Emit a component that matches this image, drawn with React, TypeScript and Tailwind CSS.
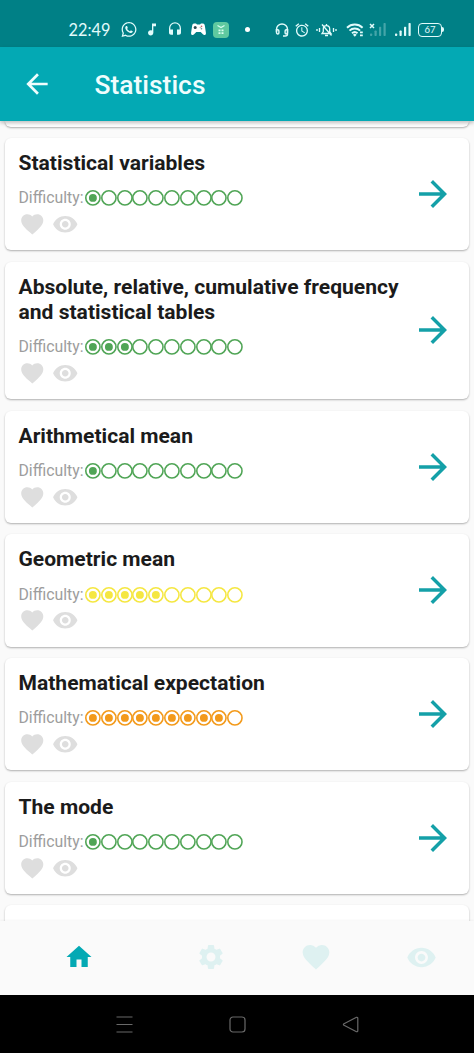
import clsx from "clsx";
import { ReactNode } from "react";
import { FaWhatsapp } from "react-icons/fa";
import {
  MdAlarm,
  MdArrowBack,
  MdArrowForward,
  MdFavorite,
  MdHeadset,
  MdHome,
  MdMusicNote,
  MdSettings,
  MdVisibility,
} from "react-icons/md";

interface Topic {
  title: string;
  difficulty: number;
  tall?: boolean;
}

const topics: Topic[] = [
  { title: "Statistical variables", difficulty: 1 },
  { title: "Absolute, relative, cumulative frequency and statistical tables", difficulty: 3, tall: true },
  { title: "Arithmetical mean", difficulty: 1 },
  { title: "Geometric mean", difficulty: 5 },
  { title: "Mathematical expectation", difficulty: 9 },
  { title: "The mode", difficulty: 1 },
];

function difficultyColor(difficulty: number) {
  if (difficulty > 6) return "text-[#f39a1b]";
  if (difficulty > 3) return "text-[#f5e742]";
  return "text-[#50a556]";
}

function GamepadIcon() {
  return (
    <svg width="15" height="13" viewBox="0 0 15 13">
      <path d="M3 .5h2l1 1h3l1-1h2c1 0 1.5.8 1.8 2l1.1 7.2c.3 2.2-1.7 3-3 1.6L9.700 9H5.300l-2.200 2.300C1.800 12.700-.2 11.900.1 9.700L1.200 2.500C1.500 1.300 2 .5 3 .5z" fill="#fff" />
      <circle cx="4.200" cy="4.500" r="1.500" fill="#2a4a50" />
      <circle cx="10.500" cy="3.400" r=".8" fill="#c7656b" />
      <circle cx="10.500" cy="5.800" r=".8" fill="#6b8f95" />
      <circle cx="9.200" cy="4.600" r=".7" fill="#8fb3a0" />
    </svg>
  );
}

function AppBadge() {
  return (
    <svg width="16" height="16" viewBox="0 0 16 16">
      <rect width="16" height="16" rx="4" fill="#5fc9a0" />
      <path d="M4.500 3.500 8 5.500l3.500-2" fill="none" stroke="#d8fff0" strokeWidth="1.200" />
      <path d="M5.500 7.500h2v1.800h-2zM8.500 7.500h2v1.800h-2zM5.500 10.300h2v1.800h-2zM8.500 10.300h2v1.800h-2z" fill="#d8fff0" />
    </svg>
  );
}

function HeadphonesIcon() {
  return (
    <svg width="14" height="14" viewBox="0 0 14 14" fill="none" stroke="currentColor" strokeWidth="1.400">
      <path d="M1.500 9V6.500a5.500 5.500 0 0 1 11 0V11c0 1.300-.8 2-2.300 2H8" />
      <path d="M1.500 6.800h1.200c.8 0 1.200.4 1.200 1.100v2c0 .7-.4 1.100-1.100 1.100-.8 0-1.300-.5-1.300-1.400zM12.500 6.800h-1.200c-.8 0-1.200.4-1.200 1.100v2c0 .7.400 1.100 1.100 1.100.8 0 1.300-.5 1.300-1.400z" />
    </svg>
  );
}

function MutedBellIcon() {
  return (
    <svg width="21" height="14" viewBox="0 0 21 14" fill="none" stroke="currentColor" strokeWidth="1.300">
      <path d="M6 10.500h9l-1.300-2V6c0-2-1.200-3.400-3.200-3.400S7.300 4 7.300 6v2.500zM10.500 1v1.600M9 12.500h3M6 1.500l9.500 11" />
      <path d="M3.500 5v4M1 6v2M17.500 5v4M20 6v2" />
    </svg>
  );
}

function WifiIcon() {
  return (
    <svg width="18" height="14" viewBox="0 0 18 14" fill="none" stroke="currentColor" strokeWidth="1.900">
      <path d="M1 4.700c4.400-4.300 11.200-4.300 15.600 0M3.500 7.600c3-2.900 7.600-2.900 10.600 0M6 10.300c1.600-1.500 3.900-1.500 5.500 0" />
      <path d="M8.800 10.500 6.900 11.700l1.900 2 1.900-2z" fill="currentColor" stroke="none" />
      <path d="M14 9.400h2.800M14 12.400h2.800" strokeWidth="1.600" />
    </svg>
  );
}

function SignalIcon({ empty }: { empty?: boolean }) {
  return (
    <svg width="18" height="15" viewBox="0 0 18 15" fill="currentColor">
      <g opacity={empty ? 0.3 : 1}>
        <rect x="1" y="11.500" width="2.200" height="2.500" rx=".7" />
        <rect x="5.500" y="8.500" width="2.200" height="5.500" rx=".7" />
        <rect x="10" y="4.800" width="2.200" height="9.200" rx=".7" />
        <rect x="14.500" y="1" width="2.200" height="13" rx=".7" />
      </g>
      {empty && <path d="m1 2 4 4m0-4L1 6" stroke="currentColor" strokeWidth="1.500" />}
    </svg>
  );
}

function StatusItem({ className, children }: { className: string; children: ReactNode }) {
  return <span className={clsx("flex shrink-0 justify-center", className)}>{children}</span>;
}

function StatusBar() {
  return (
    <div className="flex h-[47px] shrink-0 items-center bg-[#008086] pt-3 text-[#e2fbfb]">
      <span className="ml-[68.5px] w-[45.5px] font-['Lato'] text-[16.3px] leading-5 whitespace-nowrap">22:49</span>
      <StatusItem className="ml-[7px] w-4"><FaWhatsapp size={17} /></StatusItem>
      <StatusItem className="ml-[7px] w-4"><MdMusicNote size={19} /></StatusItem>
      <StatusItem className="ml-[7px] w-4"><MdHeadset size={17} /></StatusItem>
      <StatusItem className="ml-[7px] w-4"><GamepadIcon /></StatusItem>
      <StatusItem className="ml-[7px] w-4"><AppBadge /></StatusItem>
      <span className="ml-[15.5px] size-[5.5px] shrink-0 rounded-full bg-white" />
      <StatusItem className="ml-[25px] w-3.5"><HeadphonesIcon /></StatusItem>
      <StatusItem className="ml-[5px] w-4"><MdAlarm size={16} /></StatusItem>
      <StatusItem className="ml-1.5 w-[21px]"><MutedBellIcon /></StatusItem>
      <StatusItem className="ml-[9px] w-[18px]"><WifiIcon /></StatusItem>
      <StatusItem className="ml-[5px] w-[18px]"><SignalIcon empty /></StatusItem>
      <StatusItem className="ml-[7px] w-[18px]"><SignalIcon /></StatusItem>
      <span className="ml-1.5 flex h-[14px] w-6 shrink-0 items-center justify-center rounded-[4px] border-[1.5px] border-current font-['Lato'] text-[9.5px] leading-none">
        67
      </span>
      <span className="h-[5px] w-[2px] shrink-0 rounded-r bg-current" />
    </div>
  );
}

function Difficulty({ value }: { value: number }) {
  return (
    <div className="flex h-5 items-center">
      <span className="w-[66.5px] text-[15.8px] whitespace-nowrap text-[#9d9d9d]">Difficulty:</span>
      <div className={clsx("flex", difficultyColor(value))}>
        {Array.from({ length: 10 }, (_, i) => (
          <svg key={i} className="h-[15.8px] w-[15.8px] overflow-visible" viewBox="0 0 20 20">
            <circle cx="10" cy="10" r="9" fill="none" stroke="currentColor" strokeWidth="2" />
            {i < value && <circle cx="10" cy="10" r="5" fill="currentColor" />}
          </svg>
        ))}
      </div>
    </div>
  );
}

function TopicCard({ title, difficulty, tall }: Topic) {
  return (
    <div
      className={clsx(
        "flex shrink-0 items-center rounded-md bg-white pr-[15px] pl-[13.5px] shadow-[0_1px_2px_rgba(0,0,0,0.3)]",
        tall ? "h-[137.6px]" : "h-[112.4px]"
      )}
    >
      <div className="h-full flex-1 pt-[12.2px]">
        <h2 className="w-[390px] text-[21.07px] leading-[25.2px] font-bold text-[#1b1b1b]">{title}</h2>
        <div className="mt-[12.8px]">
          <Difficulty value={difficulty} />
        </div>
        <div className="mt-[3px] flex gap-[6.5px] text-[#dedede]">
          <MdFavorite size={26.5} />
          <MdVisibility size={26.5} />
        </div>
      </div>
      <MdArrowForward size={42} className="-ml-10 shrink-0 text-[#14a0a8]" />
    </div>
  );
}

function BottomNav() {
  return (
    <nav className="z-10 flex h-[74px] shrink-0 items-center bg-[#fafafa] pb-[2px] pl-[26px] text-[#def1f1] shadow-[0_-1px_2px_rgba(0,0,0,0.04)]">
      <div className="flex w-[106px] shrink-0 justify-center text-[#03a9b4]"><MdHome size={30} /></div>
      <div className="flex w-[157px] shrink-0 justify-center"><MdSettings size={30} /></div>
      <div className="flex w-[54px] shrink-0 justify-center"><MdFavorite size={32} /></div>
      <div className="flex w-[156px] shrink-0 justify-center"><MdVisibility size={31} /></div>
    </nav>
  );
}

function SystemNav() {
  return (
    <div className="flex h-[58px] shrink-0 items-center justify-center gap-24 bg-black text-[#696969]">
      <svg width="17" height="17" viewBox="0 0 17 17" fill="none" stroke="currentColor" strokeWidth="1.200">
        <path d="M.5 1h16M.5 8.500h16M.5 16h16" />
      </svg>
      <svg width="17" height="17" viewBox="0 0 17 17" fill="none" stroke="currentColor" strokeWidth="1.200">
        <rect x="1" y="1" width="15" height="15" rx="3" />
      </svg>
      <svg width="17" height="17" viewBox="0 0 17 17" fill="none" stroke="currentColor" strokeWidth="1.200" strokeLinejoin="round">
        <path d="M14.500 1.300 2 7.700q-1.200.8 0 1.600l12.500 6.400q1.300.3 1.300-1V2.300q0-1.300-1.300-1z" />
      </svg>
    </div>
  );
}

export default function App() {
  return (
    <div className="flex h-[1053px] w-[474px] flex-col overflow-hidden bg-[#fafafa] font-['Roboto',sans-serif]">
      <StatusBar />
      <header className="z-10 flex h-[74px] shrink-0 items-center bg-[#03a9b4] pl-[21px] text-[#effdfd] shadow-[0_2px_4px_rgba(0,0,0,0.25)]">
        <MdArrowBack size={32} />
        <h1 className="ml-[41.5px] pt-[3px] text-[26.4px] font-medium">Statistics</h1>
      </header>
      <main className="flex min-h-0 flex-1 flex-col gap-[11.3px] overflow-hidden px-[5px]">
        <div className="h-[5.7px] shrink-0 rounded-b-md bg-white shadow-[0_1px_2px_rgba(0,0,0,0.3)]" />
        {topics.map((topic) => (
          <TopicCard key={topic.title} {...topic} />
        ))}
        <div className="h-8 shrink-0 rounded-t-md bg-white shadow-[0_1px_2px_rgba(0,0,0,0.3)]" />
      </main>
      <BottomNav />
      <SystemNav />
    </div>
  );
}
